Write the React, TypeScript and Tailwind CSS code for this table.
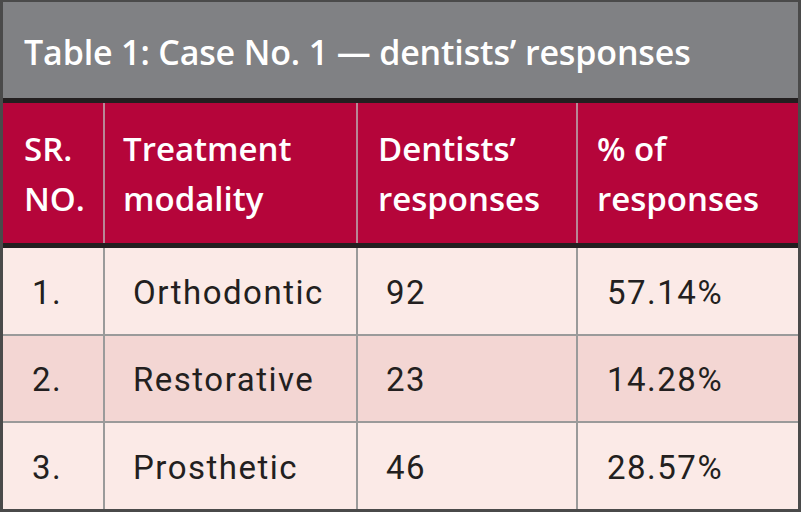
import React from "react";

const rows = [
  { n: "1.", m: "Orthodontic", d: "92", p: "57.14%", bg: "bg-[#fbeae7]" },
  { n: "2.", m: "Restorative", d: "23", p: "14.28%", bg: "bg-[#f3d6d3]" },
  { n: "3.", m: "Prosthetic", d: "46", p: "28.57%", bg: "bg-[#fbeae7]" },
];

export default function App() {
  return (
    <div className="w-[801px] h-[513px] bg-white">
      <div className="w-[801px] h-[512px] border-[3px] border-t-2 border-[#4a4a4a] flex flex-col overflow-hidden">
        <div
          className="h-[96px] bg-[#808184] flex items-center pl-[21px] pt-[4px] text-white text-[34px] font-semibold tracking-[-0.15px]"
          style={{ fontFamily: '"Open Sans", sans-serif' }}
        >
          Table 1: Case No. 1 — dentists’ responses
        </div>
        <div className="h-[5px] bg-[#231f20]" />
        <div
          className="h-[140px] bg-[#b5053a] grid grid-cols-[102px_253px_220px_1fr] text-white text-[33px] font-semibold leading-[50px]"
          style={{ fontFamily: '"Open Sans", sans-serif' }}
        >
          <div className="pl-[21px] pt-[21px] border-r-2 border-[#b98796]">
            SR.
            <br />
            NO.
          </div>
          <div className="pl-[18px] pt-[21px] border-r-2 border-[#b98796]">
            Treatment
            <br />
            modality
          </div>
          <div className="pl-[20px] pt-[21px] border-r-2 border-[#b98796]">
            Dentists’
            <br />
            responses
          </div>
          <div className="pl-[19px] pt-[21px]">
            % of
            <br />
            responses
          </div>
        </div>
        <div className="h-[5px] bg-[#231f20]" />
        <div
          className="flex-1 flex flex-col text-[#231f20] text-[33px] tracking-[1.5px]"
          style={{ fontFamily: 'Roboto, sans-serif' }}
        >
          {rows.map((r, i) => (
            <div
              key={i}
              className={`flex-1 grid grid-cols-[102px_253px_220px_1fr] ${r.bg} ${i < 2 ? "border-b-2 border-[#9a9a9a]" : ""}`}
            >
              <div className="pl-[29px] pt-[3px] flex items-center border-r-2 border-[#9a9a9a]">{r.n}</div>
              <div className="pl-[28px] pt-[3px] flex items-center border-r-2 border-[#9a9a9a]">{r.m}</div>
              <div className="pl-[28px] pt-[3px] flex items-center border-r-2 border-[#9a9a9a]">{r.d}</div>
              <div className="pl-[29px] pt-[3px] flex items-center">{r.p}</div>
            </div>
          ))}
        </div>
      </div>
    </div>
  );
}
